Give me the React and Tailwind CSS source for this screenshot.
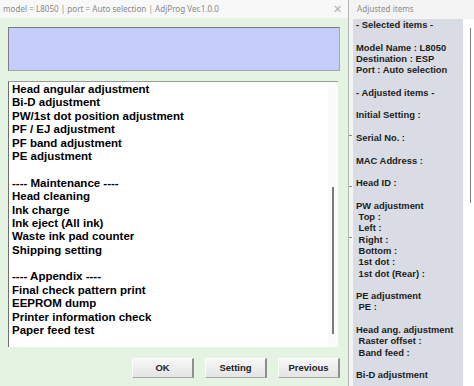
const LIST = [
  "Head angular adjustment",
  "Bi-D adjustment",
  "PW/1st dot position adjustment",
  "PF / EJ adjustment",
  "PF band adjustment",
  "PE adjustment",
  "",
  "---- Maintenance ----",
  "Head cleaning",
  "Ink charge",
  "Ink eject (All ink)",
  "Waste ink pad counter",
  "Shipping setting",
  "",
  "---- Appendix ----",
  "Final check pattern print",
  "EEPROM dump",
  "Printer information check",
  "Paper feed test",
];

const ADJUSTED = [
  "- Selected items -",
  "",
  "Model Name : L8050",
  "Destination : ESP",
  "Port : Auto selection",
  "",
  "- Adjusted items -",
  "",
  "Initial Setting :",
  "",
  "Serial No. :",
  "",
  "MAC Address :",
  "",
  "Head ID :",
  "",
  "PW adjustment",
  " Top :",
  " Left :",
  " Right :",
  " Bottom :",
  " 1st dot :",
  " 1st dot (Rear) :",
  "",
  "PE adjustment",
  " PE :",
  "",
  "Head ang. adjustment",
  " Raster offset :",
  " Band feed :",
  "",
  "Bi-D adjustment",
];

function Button({ children }) {
  return (
    <button className="w-[62px] h-[20px] bg-gradient-to-b from-[#f7f7f7] to-[#e4e4e4] border-t border-l border-t-[#fdfdfd] border-l-[#fdfdfd] border-r-2 border-b border-r-[#8e8e8e] border-b-[#a8a8a8] text-[9.5px] font-bold text-[#222] leading-none">
      {children}
    </button>
  );
}

export default function App() {
  return (
    <div className="flex w-[474px] h-[386px] overflow-hidden bg-white" style={{ fontFamily: '"Liberation Sans", Arial, sans-serif' }}>
      {/* main AdjProg window */}
      <div className="flex flex-col w-[348px] h-full">
        <div className="flex items-center justify-between h-[18px] bg-[#f7f8f7] pl-[3px] pr-[6px]">
          <span className="text-[8.1px] text-[#8a8a8a]" style={{ fontFamily: '"Noto Sans", "Open Sans", sans-serif' }}>
            model = L8050 | port = Auto selection | AdjProg Ver.1.0.0
          </span>
          <span className="text-[11px] text-[#b0b0b0] leading-none">✕</span>
        </div>
        <div className="flex-1 flex flex-col bg-[#e5f3e3] pl-[8px] pr-[8px] pt-[9px]">
          <div className="h-[44px] bg-[#c5cdfb] border border-[#a3a8b8] border-t-[#7c7c86] border-l-[#7c7c86]" />
          <div className="mt-[10px] h-[266px] flex bg-white border-t border-l border-t-[#9a9a9a] border-l-[#6e6e6e] mr-[2px]">
            <div className="flex-1 pl-[3px] pt-[1px] text-[11.5px] font-bold leading-[13.4px] text-black">
              {LIST.map((t, i) => (
                <div key={i} className="h-[13.4px] whitespace-pre">{t}</div>
              ))}
            </div>
            <div className="w-[10px] bg-[#fafbfa] flex justify-center pt-[105px]">
              <div className="w-[1.5px] h-[147px] bg-[#7a7a7a]" />
            </div>
          </div>
          <div className="flex justify-end gap-[11px] mt-[11px]">
            <Button>OK</Button>
            <Button>Setting</Button>
            <Button>Previous</Button>
          </div>
        </div>
      </div>

      {/* splitter */}
      <div className="w-[1px] h-full bg-[#b4b8b4]" />
      <div className="w-[4px] h-full bg-[#f4f5f4] flex flex-col items-start pt-[135px] gap-[50px]">
        <div className="w-[3px] h-[1px] bg-[#8a8a8a]" />
        <div className="w-[3px] h-[1px] bg-[#8a8a8a]" />
        <div className="w-[3px] h-[1px] bg-[#8a8a8a]" />
      </div>

      {/* adjusted items panel */}
      <div className="flex-1 flex flex-col h-full bg-[#f4f4f4]">
        <div className="h-[19px] flex items-center pl-[4px] text-[8.1px] text-[#8d8d8d]" style={{ fontFamily: '"Noto Sans", "Open Sans", sans-serif' }}>
          Adjusted items
        </div>
        <div className="flex-1 flex">
          <div className="w-[110px] bg-[#d9dce4] pl-[3px] text-[9.4px] font-bold leading-[11.3px] text-[#1c1c1c]">
            {ADJUSTED.map((t, i) => (
              <div key={i} className="h-[11.3px] whitespace-pre">{t}</div>
            ))}
          </div>
          <div className="flex-1 bg-white flex justify-end pr-[3px] pt-[9px]">
            <div className="w-[1.5px] h-[175px] bg-[#7e7e7e]" />
          </div>
        </div>
      </div>
    </div>
  );
}
